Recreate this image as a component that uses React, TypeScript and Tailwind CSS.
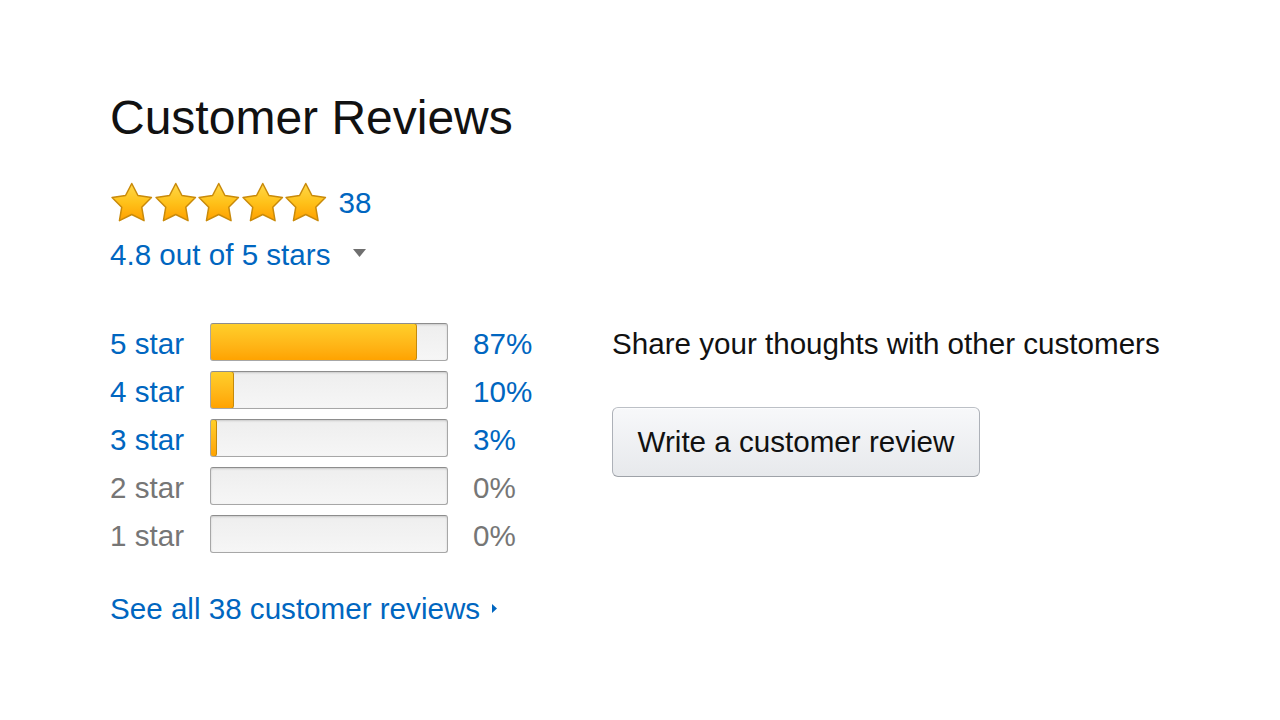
import React from "react";

const font = { fontFamily: '"Liberation Sans", Arial, sans-serif' };

function Star() {
  return (
    <svg width="43.5" height="40" viewBox="0 0 43 40" className="block">
      <defs>
        <linearGradient id="sg" x1="0" y1="0" x2="0" y2="1">
          <stop offset="0" stopColor="#ffd84a" />
          <stop offset="0.5" stopColor="#ffc21a" />
          <stop offset="1" stopColor="#ffa000" />
        </linearGradient>
      </defs>
      <path
        d="M21.5 1.5 L27.7 13.5 L41.2 15.5 L31.5 25.2 L33.8 38.7 L21.5 32.5 L9.2 38.7 L11.5 25.2 L1.8 15.5 L15.3 13.5 Z"
        fill="url(#sg)"
        stroke="#c98a0a"
        strokeWidth="1.5"
        strokeLinejoin="round"
      />
    </svg>
  );
}

const rows = [
  { label: "5 star", pct: 87, active: true },
  { label: "4 star", pct: 10, active: true },
  { label: "3 star", pct: 3, active: true },
  { label: "2 star", pct: 0, active: false },
  { label: "1 star", pct: 0, active: false },
];

export default function App() {
  return (
    <div className="min-h-[720px] w-[1280px] bg-white pl-[110px] pt-[90px]" style={font}>
      <h2 className="text-[48px] leading-[56px] text-[#111] font-normal">Customer Reviews</h2>

      <div className="mt-[36px] flex h-[40px] items-center">
        <div className="flex">
          {[0, 1, 2, 3, 4].map((i) => (
            <Star key={i} />
          ))}
        </div>
        <span className="ml-[11px] text-[29.6px] leading-[40px] text-[#0066c0] pt-[2px]">38</span>
      </div>

      <div className="mt-[13px] flex h-[40px] items-center">
        <span className="text-[29.6px] leading-[40px] text-[#0066c0]">4.8 out of 5 stars</span>
        <svg width="13" height="9" viewBox="0 0 13 9" className="ml-[23px] mt-[-4px]">
          <path d="M0 0 H13 L6.5 8 Z" fill="#6f6f6f" />
        </svg>
      </div>

      <div className="mt-[48px] flex">
        <div className="flex w-[502px] flex-col gap-[10px]">
          {rows.map((r) => (
            <div key={r.label} className="flex h-[38px] items-center">
              <span
                className={`w-[100px] text-[29.6px] leading-[38px] pt-[4px] ${r.active ? "text-[#0066c0]" : "text-[#767676]"}`}
              >
                {r.label}
              </span>
              <div className="relative h-[38px] w-[238px] overflow-hidden rounded-[3px] border border-[#a7a7a7] border-t-[#8d8d8d] bg-gradient-to-b from-[#eeeeee] to-[#f6f6f6] shadow-[inset_0_1px_2px_rgba(0,0,0,0.15)]">
                {r.pct > 0 && (
                  <div
                    className="absolute left-[-1px] top-[-1px] bottom-[-1px] rounded-[3px] border border-[#c48a0b] bg-gradient-to-b from-[#ffcf2a] to-[#ffa300]"
                    style={{ width: `${Math.max(Math.round((r.pct / 100) * 238), 7)}px` }}
                  />
                )}
              </div>
              <span
                className={`ml-[25px] text-[29.6px] leading-[38px] pt-[4px] ${r.active ? "text-[#0066c0]" : "text-[#767676]"}`}
              >
                {r.pct}%
              </span>
            </div>
          ))}
        </div>

        <div className="flex flex-col items-start">
          <div className="text-[29.6px] leading-[38px] pt-[2px] text-[#111]">Share your thoughts with other customers</div>
          <button className="mt-[44px] flex h-[70px] w-[368px] items-center justify-center rounded-[6px] border border-[#adb1b8] border-t-[#bcc0c6] border-b-[#9ea2a8] bg-gradient-to-b from-[#f7f8fa] to-[#e7e9ec] text-[29.6px] leading-[38px] text-[#111] shadow-[inset_0_1px_0_rgba(255,255,255,0.6)]">
            Write a customer review
          </button>
        </div>
      </div>

      <div className="mt-[36px] flex h-[40px] items-center">
        <span className="text-[29.6px] leading-[40px] text-[#0066c0]">See all 38 customer reviews</span>
        <svg width="5" height="9" viewBox="0 0 5 9" className="ml-[12px] mt-[-2px]">
          <path d="M0 0 L5 4.5 L0 9 Z" fill="#0066c0" />
        </svg>
      </div>
    </div>
  );
}
